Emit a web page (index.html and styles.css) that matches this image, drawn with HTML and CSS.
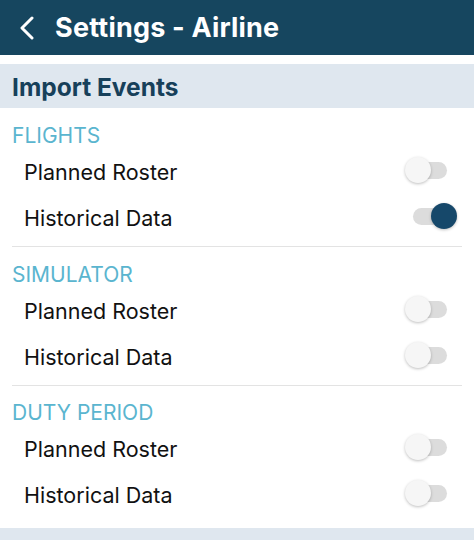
FILE: index.html
```html
<!DOCTYPE html>
<html lang="en">
<head>
    <meta charset="UTF-8">
    <meta name="viewport" content="width=device-width, initial-scale=1.0">
    <title>Settings - Airline</title>
    <link rel="stylesheet" href="styles.css">
</head>
<body>

    <!-- Top Bar -->
    <div class="topbar">
        <svg class="back-icon" width="18" height="24" viewBox="0 0 18 24">
            <path d="M14 2 L4 12 L14 22" fill="none" stroke="#fff" stroke-width="3" stroke-linecap="round" stroke-linejoin="round"/>
        </svg>
        <h1 class="title">Settings - Airline</h1>
    </div>

    <!-- Import Events -->
    <div class="group-head">Import Events</div>

    <div class="section">
        <div class="section-label">FLIGHTS</div>
        <div class="row">
            <span>Planned Roster</span>
            <div class="switch"><div class="track"></div><div class="thumb"></div></div>
        </div>
        <div class="row">
            <span>Historical Data</span>
            <div class="switch on"><div class="track"></div><div class="thumb"></div></div>
        </div>
    </div>

    <div class="section">
        <div class="section-label">SIMULATOR</div>
        <div class="row">
            <span>Planned Roster</span>
            <div class="switch"><div class="track"></div><div class="thumb"></div></div>
        </div>
        <div class="row">
            <span>Historical Data</span>
            <div class="switch"><div class="track"></div><div class="thumb"></div></div>
        </div>
    </div>

    <div class="section last">
        <div class="section-label">DUTY PERIOD</div>
        <div class="row">
            <span>Planned Roster</span>
            <div class="switch"><div class="track"></div><div class="thumb"></div></div>
        </div>
        <div class="row">
            <span>Historical Data</span>
            <div class="switch"><div class="track"></div><div class="thumb"></div></div>
        </div>
    </div>

    <div class="group-foot"></div>

</body>
</html>
```

FILE: styles.css
```css
/* Page */
body {
    margin: 0;
    padding: 0;
    font-family: 'Inter', 'Noto Sans', sans-serif;
    background-color: #fff;
    color: #111;
}

/* Top Bar */
.topbar {
    height: 55px;
    background-color: #16465f;
    display: flex;
    align-items: center;
    padding-left: 18px;
}

.back-icon {
    margin-right: 19px;
}

.title {
    margin: 0;
    color: #fff;
    font-size: 27px;
    font-weight: 700;
    letter-spacing: 0.2px;
}

/* Group header */
.group-head {
    margin-top: 9px;
    height: 44px;
    line-height: 46px;
    background-color: #dfe7ef;
    color: #17405a;
    font-size: 24.5px;
    font-weight: 700;
    padding-left: 12px;
}

.group-foot {
    margin-top: 5px;
    height: 20px;
    background-color: #dfe7ef;
}

/* Sections */
.section {
    margin: 0 12px;
    padding: 15px 0 7px;
    border-bottom: 1px solid #e3e3e3;
}

.section.last {
    border-bottom: none;
    padding-top: 14px;
}

.section-label {
    height: 24px;
    line-height: 26px;
    color: #5ab5cf;
    font-size: 21px;
}

.row {
    height: 46px;
    display: flex;
    align-items: center;
    justify-content: space-between;
    padding-left: 12px;
    font-size: 21.5px;
}

.row span {
    margin-top: 4px;
}

/* Toggle switch */
.switch {
    position: relative;
    width: 52px;
    height: 26px;
    margin-right: 5px;
}

.switch .track {
    position: absolute;
    left: 8px;
    right: 10px;
    top: 5px;
    height: 17px;
    border-radius: 9px;
    background-color: #dcdcdc;
}

.switch .thumb {
    position: absolute;
    left: 0;
    top: 0;
    width: 26px;
    height: 26px;
    border-radius: 50%;
    background-color: #f6f6f6;
    box-shadow: 0 1px 3px rgba(0, 0, 0, 0.25);
}

.switch.on .thumb {
    left: auto;
    right: 0;
    background-color: #16486a;
}
```
